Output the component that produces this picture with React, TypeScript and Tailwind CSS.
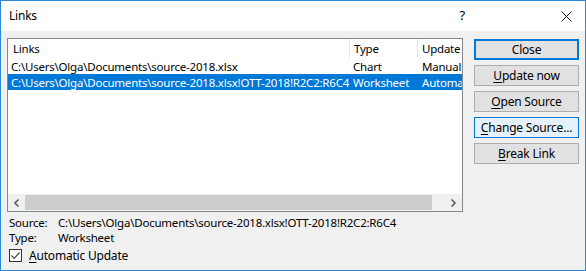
const font = { fontFamily: '"Segoe UI", "Noto Sans", "Liberation Sans", sans-serif' };

function Btn({ label, u, variant }: { label: string; u?: number; variant?: "default" | "hover" }) {
  const base =
    variant === "default"
      ? "border-2 border-[#0078d7] bg-[#e1e1e1]"
      : variant === "hover"
      ? "border border-[#0078d7] bg-[#e5f1fb]"
      : "border border-[#adadad] bg-[#e1e1e1]";
  return (
    <div className={`h-[21px] w-[105px] flex items-center justify-center text-[12px] tracking-[-0.2px] text-black ${base}`}>
      {u === undefined ? (
        label
      ) : (
        <span>
          {label.slice(0, u)}
          <span className="underline underline-offset-2">{label[u]}</span>
          {label.slice(u + 1)}
        </span>
      )}
    </div>
  );
}

export default function App() {
  return (
    <div
      className="w-[586px] h-[271px] border border-[#2b88d8] bg-[#f0f0f0] flex flex-col text-black overflow-hidden text-[11.5px] tracking-[-0.22px]"
      style={font}
    >
      {/* Title bar */}
      <div className="h-[30px] bg-white flex items-center shrink-0">
        <span className="pl-[8px] text-[12px]">Links</span>
        <span className="ml-auto text-[13px] mr-[96px]">?</span>
        <svg width="11" height="11" viewBox="0 0 11 11" className="mr-[13px]">
          <path d="M0.5 0.5L10.5 10.5M10.5 0.5L0.5 10.5" stroke="#111" strokeWidth="1" />
        </svg>
      </div>

      <div className="flex flex-1 pl-[6px] pr-[6px] pt-[7px]">
        {/* Left column */}
        <div className="flex flex-col w-[456px]">
          <div className="h-[174px] border border-[#828790] bg-white flex flex-col">
            <div className="h-[19px] flex items-center leading-[15px]">
              <div className="w-[342px] pl-[5px] h-full flex items-center border-r border-[#e5e5e5]">Links</div>
              <div className="w-[68px] pl-[4px] h-full flex items-center border-r border-[#e5e5e5]">Type</div>
              <div className="flex-1 pl-[4px] h-full flex items-center overflow-hidden whitespace-nowrap">Update</div>
            </div>
            <div className="h-[16px] flex items-center whitespace-nowrap leading-[15px]">
              <div className="w-[343px] pl-[3px] overflow-hidden">C:\Users\Olga\Documents\source-2018.xlsx</div>
              <div className="w-[68px] pl-[2px] overflow-hidden">Chart</div>
              <div className="flex-1 pl-[3px] overflow-hidden">Manual</div>
            </div>
            <div className="h-[16px] flex items-center whitespace-nowrap bg-[#0078d7] text-white leading-[15px]">
              <div className="w-[343px] pl-[3px] overflow-hidden">C:\Users\Olga\Documents\source-2018.xlsx!OTT-2018!R2C2:R6C4</div>
              <div className="w-[68px] pl-[2px] overflow-hidden">Worksheet</div>
              <div className="flex-1 pl-[3px] overflow-hidden">Automatic</div>
            </div>
            <div className="flex-1" />
            {/* Horizontal scrollbar */}
            <div className="h-[17px] flex bg-[#f0f0f0]">
              <div className="w-[17px] flex items-center justify-center">
                <svg width="6" height="8" viewBox="0 0 6 8">
                  <path d="M4.5 0.5L1 4L4.5 7.5" stroke="#606060" strokeWidth="1.6" fill="none" />
                </svg>
              </div>
              <div className="flex-1 my-[1px] bg-[#cdcdcd]" />
              <div className="w-[30px] flex items-center justify-end pr-[6px]">
                <svg width="6" height="8" viewBox="0 0 6 8">
                  <path d="M1.5 0.5L5 4L1.5 7.5" stroke="#606060" strokeWidth="1.6" fill="none" />
                </svg>
              </div>
            </div>
          </div>

          <div className="flex flex-col leading-[15px] pl-[2px] pt-[3px]">
            <div className="h-[15px] flex items-center whitespace-nowrap">
              <span className="w-[49px]">Source:</span>
              <span>C:\Users\Olga\Documents\source-2018.xlsx!OTT-2018!R2C2:R6C4</span>
            </div>
            <div className="h-[15px] flex items-center">
              <span className="w-[49px]">Type:</span>
              <span>Worksheet</span>
            </div>
            <div className="h-[18px] flex items-center mt-[1px]">
              <div className="w-[13px] h-[13px] border border-[#333] bg-white flex items-center justify-center">
                <svg width="11" height="11" viewBox="0 0 11 11">
                  <path d="M1.5 5.5L4.2 8.3L9.5 2.5" stroke="#444" strokeWidth="1.2" fill="none" />
                </svg>
              </div>
              <span className="ml-[7px] text-[12px] tracking-[-0.2px]">
                <span className="underline underline-offset-2">A</span>utomatic Update
              </span>
            </div>
          </div>
        </div>

        {/* Buttons */}
        <div className="ml-auto flex flex-col gap-[5px] pt-[1px]">
          <Btn label="Close" variant="default" />
          <Btn label="Update now" u={0} />
          <Btn label="Open Source" u={0} />
          <Btn label="Change Source..." u={0} variant="hover" />
          <Btn label="Break Link" u={0} />
        </div>
      </div>
    </div>
  );
}
